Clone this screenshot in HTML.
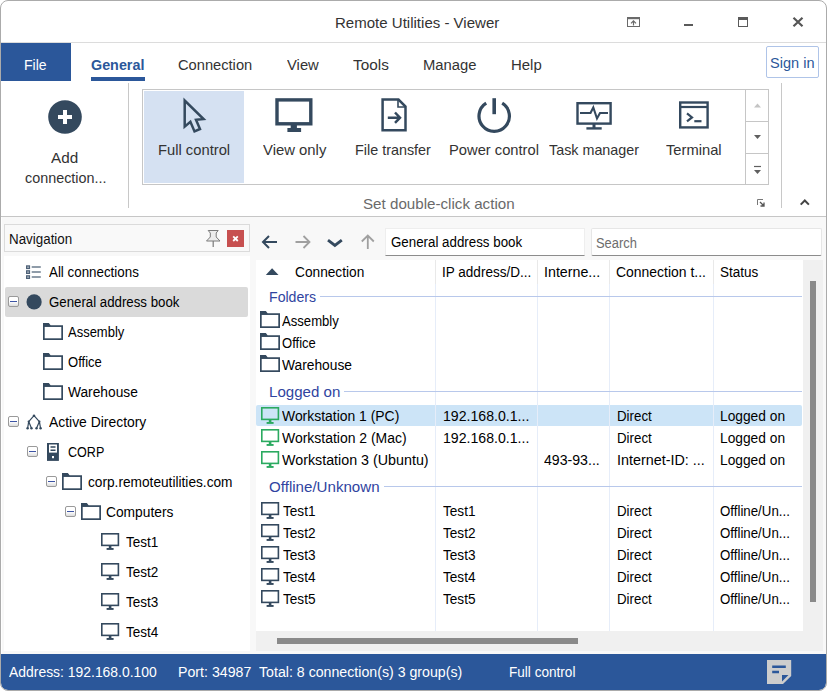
<!DOCTYPE html>
<html><head><meta charset="utf-8"><title>Remote Utilities - Viewer</title>
<style>
html,body{margin:0;padding:0;background:#fff;}
body{width:827px;height:691px;overflow:hidden;position:relative;font-family:"Liberation Sans",sans-serif;}
#win{position:absolute;left:0;top:0;width:827px;height:691px;overflow:hidden;}
#frame{position:absolute;left:0;top:0;width:827px;height:691px;box-sizing:border-box;border:1px solid #ABABAB;border-radius:8px;pointer-events:none;}
.r{position:absolute;display:block;}
.t{position:absolute;white-space:nowrap;transform-origin:0 50%;display:block;}
</style></head><body>
<div id="win">
<span class="t" style="left:334.50px;top:13.00px;font-size:15.5px;line-height:20px;color:#333;transform:scaleX(0.9698);">Remote Utilities - Viewer</span>
<div class="r" style="left:1px;top:42px;width:825px;height:1px;background:#DCDCDC;"></div>
<svg class="r" style="left:626px;top:16px" width="16" height="12" viewBox="0 0 16 12"><rect x="1.5" y="1.5" width="12" height="9" fill="none" stroke="#6a6a6a" stroke-width="1"/><rect x="1" y="1" width="13" height="2.2" fill="#6a6a6a"/><path d="M7.5 9.5V5M5 7.3L7.5 4.8L10 7.3" fill="none" stroke="#6a6a6a" stroke-width="1.2"/></svg>
<div class="r" style="left:684px;top:23.5px;width:9px;height:2.0px;background:#5a5a5a;"></div>
<svg class="r" style="left:737px;top:16px" width="12" height="12" viewBox="0 0 12 12"><rect x="1.5" y="1.5" width="9" height="9" fill="none" stroke="#5a5a5a" stroke-width="1"/><rect x="1" y="1" width="10" height="3" fill="#5a5a5a"/></svg>
<svg class="r" style="left:792px;top:16px" width="12" height="12" viewBox="0 0 12 12"><path d="M1.5 1.8L10.5 10.2M10.5 1.8L1.5 10.2" stroke="#555" stroke-width="2.2" fill="none"/></svg>
<div class="r" style="left:1px;top:43px;width:70px;height:38px;background:#2B579A;"></div>
<span class="t" style="left:24.20px;top:55.00px;font-size:15.5px;line-height:20px;color:#fff;transform:scaleX(0.9056);">File</span>
<span class="t" style="left:91.30px;top:55.00px;font-size:15.5px;line-height:20px;color:#2B579A;font-weight:bold;transform:scaleX(0.9249);">General</span>
<div class="r" style="left:91px;top:77px;width:54px;height:4px;background:#2B579A;"></div>
<span class="t" style="left:178.30px;top:55.00px;font-size:15.5px;line-height:20px;color:#333;transform:scaleX(0.9461);">Connection</span>
<span class="t" style="left:287.00px;top:55.00px;font-size:15.5px;line-height:20px;color:#333;transform:scaleX(0.9542);">View</span>
<span class="t" style="left:353.00px;top:55.00px;font-size:15.5px;line-height:20px;color:#333;transform:scaleX(0.9892);">Tools</span>
<span class="t" style="left:423.30px;top:55.00px;font-size:15.5px;line-height:20px;color:#333;transform:scaleX(0.9548);">Manage</span>
<span class="t" style="left:511.30px;top:55.00px;font-size:15.5px;line-height:20px;color:#333;transform:scaleX(0.9638);">Help</span>
<div class="r" style="left:766px;top:46px;width:53px;height:32px;background:#fff;border:1px solid #AFC4E8;box-sizing:border-box;border-radius:2px;"></div>
<span class="t" style="left:770.00px;top:53.00px;font-size:15.5px;line-height:20px;color:#2B579A;transform:scaleX(0.9382);">Sign in</span>
<div class="r" style="left:128px;top:83px;width:1px;height:125px;background:#C8C8C8;"></div>
<div class="r" style="left:781px;top:83px;width:1px;height:125px;background:#C8C8C8;"></div>
<svg class="r" style="left:47px;top:99px" width="36" height="36" viewBox="0 0 36 36"><circle cx="18" cy="18" r="16.8" fill="#34495E"/><path d="M11 18H25M18 11V25" stroke="#fff" stroke-width="4"/></svg>
<span class="t" style="left:51.40px;top:149.00px;font-size:14.5px;line-height:19px;color:#333;transform:scaleX(1.0539);">Add</span>
<span class="t" style="left:24.50px;top:169.00px;font-size:14.5px;line-height:19px;color:#333;transform:scaleX(0.9913);">connection...</span>
<div class="r" style="left:142px;top:89px;width:627px;height:96px;background:#fff;border:1px solid #C6C6C6;box-sizing:border-box;"></div>
<div class="r" style="left:144px;top:91px;width:100px;height:92px;background:#D5E1F2;"></div>
<div class="r" style="left:745px;top:89px;width:1px;height:96px;background:#C6C6C6;"></div>
<div class="r" style="left:746px;top:121px;width:22px;height:1px;background:#C6C6C6;"></div>
<div class="r" style="left:746px;top:153px;width:22px;height:1px;background:#C6C6C6;"></div>
<svg class="r" style="left:752px;top:100px" width="12" height="10" viewBox="0 0 12 10"><path d="M2 7.5L5.5 3.5L9 7.5Z" fill="#C4C4C4"/></svg>
<svg class="r" style="left:752px;top:132px" width="12" height="10" viewBox="0 0 12 10"><path d="M2 3L5.5 7L9 3Z" fill="#606060"/></svg>
<svg class="r" style="left:752px;top:163.5px" width="12" height="14" viewBox="0 0 12 14"><path d="M2 2.5H9" stroke="#606060" stroke-width="1.2"/><path d="M2 6L5.5 10L9 6Z" fill="#606060"/></svg>
<svg class="r" style="left:180.4px;top:95.5px" width="30" height="40" viewBox="0 0 30 40"><path d="M4.7 4.5V30.6L10.4 25.8L14.5 35.4L20 33L16 23.8L23.6 23Z" fill="none" stroke="#34495E" stroke-width="2.5" stroke-linejoin="miter"/></svg>
<span class="t" style="left:157.70px;top:141.00px;font-size:14.5px;line-height:19px;color:#333;transform:scaleX(1.0169);">Full control</span>
<svg class="r" style="left:272px;top:95px" width="44" height="40" viewBox="0 0 44 40"><rect x="5" y="4.9" width="33.8" height="23.9" fill="none" stroke="#34495E" stroke-width="3.4"/><rect x="18.7" y="30" width="6.2" height="4" fill="#34495E"/><rect x="15.4" y="33" width="13.7" height="4" fill="#34495E"/></svg>
<span class="t" style="left:262.50px;top:141.00px;font-size:14.5px;line-height:19px;color:#333;transform:scaleX(1.0248);">View only</span>
<svg class="r" style="left:378px;top:95px" width="32" height="40" viewBox="0 0 32 40"><path d="M4.6 4.5H20.5L27.5 11.5V35.2H4.6Z" fill="none" stroke="#34495E" stroke-width="2.5"/><path d="M20 4.5V12H27.5" fill="none" stroke="#34495E" stroke-width="1.6"/><path d="M9.8 22.7H21.5M17 17.5L22 22.7L17 27.9" fill="none" stroke="#34495E" stroke-width="2.5"/></svg>
<span class="t" style="left:355.40px;top:141.00px;font-size:14.5px;line-height:19px;color:#333;transform:scaleX(0.9914);">File transfer</span>
<svg class="r" style="left:474px;top:95px" width="40" height="40" viewBox="0 0 40 40"><path d="M12.2 8.2A15.2 15.2 0 1 0 28.2 8.2" fill="none" stroke="#34495E" stroke-width="3.2"/><path d="M20.2 3.2V19.2" stroke="#34495E" stroke-width="3.6"/></svg>
<span class="t" style="left:448.50px;top:141.00px;font-size:14.5px;line-height:19px;color:#333;transform:scaleX(1.0150);">Power control</span>
<svg class="r" style="left:573px;top:95px" width="42" height="40" viewBox="0 0 42 40"><rect x="4.5" y="8.2" width="33.1" height="20.4" fill="none" stroke="#34495E" stroke-width="2.4"/><path d="M21 29V33" stroke="#34495E" stroke-width="3"/><path d="M13.4 33.4H28.7" stroke="#34495E" stroke-width="2.4"/><path d="M7 18H17.5L20.3 12.5L24 23.5L27 18H35" fill="none" stroke="#34495E" stroke-width="2.1"/></svg>
<span class="t" style="left:549.20px;top:141.00px;font-size:14.5px;line-height:19px;color:#333;transform:scaleX(0.9884);">Task manager</span>
<svg class="r" style="left:676px;top:95px" width="36" height="40" viewBox="0 0 36 40"><rect x="4.2" y="7.5" width="27.4" height="24.9" fill="none" stroke="#34495E" stroke-width="2.4"/><path d="M4 12H32" stroke="#34495E" stroke-width="2.2"/><path d="M11 18.4L16 22.4L11 26.4" fill="none" stroke="#34495E" stroke-width="2.2"/><path d="M18.3 26.2H25.5" stroke="#34495E" stroke-width="2.2"/></svg>
<span class="t" style="left:665.80px;top:141.00px;font-size:14.5px;line-height:19px;color:#333;transform:scaleX(1.0144);">Terminal</span>
<span class="t" style="left:363.00px;top:195.00px;font-size:14.5px;line-height:19px;color:#6a6a6a;transform:scaleX(1.0450);">Set double-click action</span>
<svg class="r" style="left:756px;top:198px" width="10" height="10" viewBox="0 0 10 10"><path d="M1.5 7V1.5H7" fill="none" stroke="#777" stroke-width="1"/><path d="M4 4L8 8M8 4.5V8H4.5" fill="none" stroke="#555" stroke-width="1.3"/></svg>
<svg class="r" style="left:798px;top:197px" width="14" height="10" viewBox="0 0 14 10"><path d="M2.7 7.6L6.8 3.5L10.9 7.6" fill="none" stroke="#444" stroke-width="2"/></svg>
<div class="r" style="left:1px;top:216px;width:825px;height:1px;background:#C6C6C6;"></div>
<div class="r" style="left:1px;top:217px;width:825px;height:437px;background:#F8F8F8;"></div>
<div class="r" style="left:1px;top:217px;width:1px;height:437px;background:#fff;"></div>
<div class="r" style="left:4px;top:224px;width:246px;height:28px;background:#F9F9F9;border:1px solid #DBDBDB;box-sizing:border-box;"></div>
<span class="t" style="left:9.30px;top:230.00px;font-size:14px;line-height:18px;color:#111;transform:scaleX(0.9554);">Navigation</span>
<div class="r" style="left:227px;top:230px;width:17px;height:17px;background:#C75050;"></div>
<svg class="r" style="left:227px;top:230px" width="17" height="17" viewBox="0 0 17 17"><path d="M6.2 6.4L10.8 11M10.8 6.4L6.2 11" stroke="#fff" stroke-width="1.8"/></svg>
<svg class="r" style="left:205px;top:229px" width="17" height="19" viewBox="0 0 17 19"><path d="M3.2 1.5H13.2L11.2 4V8L15 12H1.5L5.3 8V4Z" fill="#ECECEC" stroke="#7a7a7a" stroke-width="1"/><path d="M8.2 12V18" stroke="#7a7a7a" stroke-width="1.2"/></svg>
<div class="r" style="left:4px;top:256px;width:246px;height:395px;background:#fff;"></div>
<div class="r" style="left:5px;top:287px;width:243px;height:30px;background:#DADADA;border-radius:2px;"></div>
<svg class="r" style="left:26px;top:265px" width="15" height="14" viewBox="0 0 15 14"><g fill="#AEB9C4" stroke="#4E6177" stroke-width="1.2"><rect x="0.6" y="0.9" width="2.9" height="2.6"/><rect x="0.6" y="5.8" width="2.9" height="2.6"/><rect x="0.6" y="10.8" width="2.9" height="2.6"/></g><path d="M5.7 2H14.8M5.7 7H14.8M5.7 12H14.8" stroke="#6B7C8D" stroke-width="1.7"/></svg>
<span class="t" style="left:49.00px;top:263.00px;font-size:14px;line-height:18px;color:#000;transform:scaleX(0.9538);">All connections</span>
<div class="r" style="left:8px;top:296px;width:11px;height:11px;box-sizing:border-box;border:1px solid #9a9a9a;border-radius:2px;background:linear-gradient(#fff 50%,#DCDCDC);"><div class="r" style="left:1.4px;top:3.9px;width:6.4px;height:1.1px;background:#3D54A5"></div></div>
<svg class="r" style="left:26px;top:294px" width="16" height="16" viewBox="0 0 16 16"><circle cx="8.1" cy="7.9" r="7.6" fill="#34495E"/></svg>
<span class="t" style="left:49.00px;top:293.00px;font-size:14px;line-height:18px;color:#000;transform:scaleX(0.9468);">General address book</span>
<svg class="r" style="left:43px;top:323px" width="20" height="17" viewBox="0 0 20 17"><path d="M0 0H5.8L7.6 2.3V3H0Z" fill="#34495E"/><rect x="0.85" y="3.1" width="18.3" height="13.05" fill="#fff" stroke="#34495E" stroke-width="1.7"/></svg>
<span class="t" style="left:68.00px;top:323.00px;font-size:14px;line-height:18px;color:#000;transform:scaleX(0.9277);">Assembly</span>
<svg class="r" style="left:43px;top:353px" width="20" height="17" viewBox="0 0 20 17"><path d="M0 0H5.8L7.6 2.3V3H0Z" fill="#34495E"/><rect x="0.85" y="3.1" width="18.3" height="13.05" fill="#fff" stroke="#34495E" stroke-width="1.7"/></svg>
<span class="t" style="left:68.00px;top:353.00px;font-size:14px;line-height:18px;color:#000;transform:scaleX(0.9304);">Office</span>
<svg class="r" style="left:43px;top:383px" width="20" height="17" viewBox="0 0 20 17"><path d="M0 0H5.8L7.6 2.3V3H0Z" fill="#34495E"/><rect x="0.85" y="3.1" width="18.3" height="13.05" fill="#fff" stroke="#34495E" stroke-width="1.7"/></svg>
<span class="t" style="left:68.00px;top:383.00px;font-size:14px;line-height:18px;color:#000;transform:scaleX(0.9824);">Warehouse</span>
<div class="r" style="left:8px;top:416px;width:11px;height:11px;box-sizing:border-box;border:1px solid #9a9a9a;border-radius:2px;background:linear-gradient(#fff 50%,#DCDCDC);"><div class="r" style="left:1.4px;top:3.9px;width:6.4px;height:1.1px;background:#3D54A5"></div></div>
<svg class="r" style="left:26px;top:414px" width="16" height="16" viewBox="0 0 16 16"><g fill="none" stroke="#34495E" stroke-width="1.2"><path d="M8 1.6L2.7 7.6M8 1.6L13.4 7.6M2.7 7.6L1.6 14.3M2.7 7.6L5.5 14.3M13.4 7.6L10.5 14.3M13.4 7.6L14.6 14.3"/></g><g fill="#34495E"><circle cx="8" cy="1.6" r="1.2"/><circle cx="2.7" cy="7.6" r="1.1"/><circle cx="13.4" cy="7.6" r="1.1"/><circle cx="1.6" cy="14.3" r="1.2"/><circle cx="5.5" cy="14.3" r="1.2"/><circle cx="10.5" cy="14.3" r="1.2"/><circle cx="14.6" cy="14.3" r="1.2"/></g></svg>
<span class="t" style="left:49.00px;top:413.00px;font-size:14px;line-height:18px;color:#000;transform:scaleX(0.9929);">Active Directory</span>
<div class="r" style="left:27px;top:446px;width:11px;height:11px;box-sizing:border-box;border:1px solid #9a9a9a;border-radius:2px;background:linear-gradient(#fff 50%,#DCDCDC);"><div class="r" style="left:1.4px;top:3.9px;width:6.4px;height:1.1px;background:#3D54A5"></div></div>
<svg class="r" style="left:47px;top:443px" width="12" height="18" viewBox="0 0 12 18"><rect x="0" y="0" width="11.9" height="17.9" fill="#34495E"/><rect x="2" y="1.5" width="8" height="8.1" fill="#fff"/><path d="M3.5 4H8.5M3.5 7.2H8.5" stroke="#34495E" stroke-width="1.4"/><rect x="5" y="13" width="2" height="2.2" fill="#fff"/></svg>
<span class="t" style="left:68.00px;top:443.00px;font-size:14px;line-height:18px;color:#000;transform:scaleX(0.8972);">CORP</span>
<div class="r" style="left:46px;top:476px;width:11px;height:11px;box-sizing:border-box;border:1px solid #9a9a9a;border-radius:2px;background:linear-gradient(#fff 50%,#DCDCDC);"><div class="r" style="left:1.4px;top:3.9px;width:6.4px;height:1.1px;background:#3D54A5"></div></div>
<svg class="r" style="left:62px;top:473px" width="20" height="17" viewBox="0 0 20 17"><path d="M0 0H5.8L7.6 2.3V3H0Z" fill="#34495E"/><rect x="0.85" y="3.1" width="18.3" height="13.05" fill="#fff" stroke="#34495E" stroke-width="1.7"/></svg>
<span class="t" style="left:87.70px;top:473.00px;font-size:14px;line-height:18px;color:#000;transform:scaleX(0.9774);">corp.remoteutilities.com</span>
<div class="r" style="left:65px;top:506px;width:11px;height:11px;box-sizing:border-box;border:1px solid #9a9a9a;border-radius:2px;background:linear-gradient(#fff 50%,#DCDCDC);"><div class="r" style="left:1.4px;top:3.9px;width:6.4px;height:1.1px;background:#3D54A5"></div></div>
<svg class="r" style="left:81px;top:503px" width="20" height="17" viewBox="0 0 20 17"><path d="M0 0H5.8L7.6 2.3V3H0Z" fill="#34495E"/><rect x="0.85" y="3.1" width="18.3" height="13.05" fill="#fff" stroke="#34495E" stroke-width="1.7"/></svg>
<span class="t" style="left:106.40px;top:503.00px;font-size:14px;line-height:18px;color:#000;transform:scaleX(0.9845);">Computers</span>
<svg class="r" style="left:100.5px;top:533px" width="19" height="18" viewBox="0 0 19 18"><rect x="0.8" y="0.8" width="16.6" height="11.6" fill="none" stroke="#34495E" stroke-width="1.6"/><rect x="7.8" y="13" width="2.6" height="2.4" fill="#34495E"/><rect x="5.6" y="15" width="7" height="1.9" fill="#34495E"/></svg>
<span class="t" style="left:125.50px;top:533.00px;font-size:14px;line-height:18px;color:#000;transform:scaleX(0.9653);">Test1</span>
<svg class="r" style="left:100.5px;top:563px" width="19" height="18" viewBox="0 0 19 18"><rect x="0.8" y="0.8" width="16.6" height="11.6" fill="none" stroke="#34495E" stroke-width="1.6"/><rect x="7.8" y="13" width="2.6" height="2.4" fill="#34495E"/><rect x="5.6" y="15" width="7" height="1.9" fill="#34495E"/></svg>
<span class="t" style="left:125.50px;top:563.00px;font-size:14px;line-height:18px;color:#000;transform:scaleX(0.9653);">Test2</span>
<svg class="r" style="left:100.5px;top:593px" width="19" height="18" viewBox="0 0 19 18"><rect x="0.8" y="0.8" width="16.6" height="11.6" fill="none" stroke="#34495E" stroke-width="1.6"/><rect x="7.8" y="13" width="2.6" height="2.4" fill="#34495E"/><rect x="5.6" y="15" width="7" height="1.9" fill="#34495E"/></svg>
<span class="t" style="left:125.50px;top:593.00px;font-size:14px;line-height:18px;color:#000;transform:scaleX(0.9653);">Test3</span>
<svg class="r" style="left:100.5px;top:623px" width="19" height="18" viewBox="0 0 19 18"><rect x="0.8" y="0.8" width="16.6" height="11.6" fill="none" stroke="#34495E" stroke-width="1.6"/><rect x="7.8" y="13" width="2.6" height="2.4" fill="#34495E"/><rect x="5.6" y="15" width="7" height="1.9" fill="#34495E"/></svg>
<span class="t" style="left:125.50px;top:623.00px;font-size:14px;line-height:18px;color:#000;transform:scaleX(0.9653);">Test4</span>
<svg class="r" style="left:260px;top:232px" width="20" height="20" viewBox="0 0 20 20"><path d="M3 10H17M9 4L3 10L9 16" fill="none" stroke="#34495E" stroke-width="2"/></svg>
<svg class="r" style="left:293px;top:232px" width="20" height="20" viewBox="0 0 20 20"><path d="M2.5 10H16.5M10.5 4L16.5 10L10.5 16" fill="none" stroke="#A0A0A0" stroke-width="1.8"/></svg>
<svg class="r" style="left:325px;top:235px" width="20" height="14" viewBox="0 0 20 14"><path d="M3 5.2L9.9 10.4L16.8 5.2" fill="none" stroke="#34495E" stroke-width="2.9"/></svg>
<svg class="r" style="left:358px;top:232px" width="20" height="20" viewBox="0 0 20 20"><path d="M9.8 17V3.5M3.8 9.5L9.8 3.5L15.8 9.5" fill="none" stroke="#A0A0A0" stroke-width="1.8"/></svg>
<div class="r" style="left:385px;top:228px;width:200px;height:28px;background:#fff;border:1px solid #EEEEEE;border-bottom:1px solid #8C8C8C;box-sizing:border-box;"></div>
<span class="t" style="left:390.80px;top:233.00px;font-size:14px;line-height:18px;color:#000;transform:scaleX(0.9519);">General address book</span>
<div class="r" style="left:591px;top:228px;width:231px;height:28px;background:#fff;border:1px solid #E6E6E6;border-bottom:1px solid #8C8C8C;border-radius:2px;box-sizing:border-box;"></div>
<span class="t" style="left:596.40px;top:234.00px;font-size:14px;line-height:18px;color:#6d6d6d;transform:scaleX(0.9216);">Search</span>
<div class="r" style="left:256px;top:260px;width:567px;height:391px;background:#F0F0F0;"></div>
<div class="r" style="left:256px;top:260px;width:547px;height:371px;background:#fff;"></div>
<div class="r" style="left:256px;top:405px;width:546px;height:21px;background:#CCE4F7;border-radius:2px;"></div>
<div class="r" style="left:435px;top:260px;width:1px;height:24px;background:#E9E9E9;"></div>
<div class="r" style="left:435px;top:284px;width:1px;height:347px;background:#E6EDF9;"></div>
<div class="r" style="left:537px;top:260px;width:1px;height:24px;background:#E9E9E9;"></div>
<div class="r" style="left:537px;top:284px;width:1px;height:347px;background:#E6EDF9;"></div>
<div class="r" style="left:609px;top:260px;width:1px;height:24px;background:#E9E9E9;"></div>
<div class="r" style="left:609px;top:284px;width:1px;height:347px;background:#E6EDF9;"></div>
<div class="r" style="left:713px;top:260px;width:1px;height:24px;background:#E9E9E9;"></div>
<div class="r" style="left:713px;top:284px;width:1px;height:347px;background:#E6EDF9;"></div>
<svg class="r" style="left:264px;top:267px" width="18" height="9" viewBox="0 0 18 9"><path d="M1.8 8L8.1 1.2L14.5 8Z" fill="#34495E"/></svg>
<span class="t" style="left:294.50px;top:263.00px;font-size:14px;line-height:18px;color:#000;transform:scaleX(0.9783);">Connection</span>
<span class="t" style="left:442.00px;top:263.00px;font-size:14px;line-height:18px;color:#000;transform:scaleX(0.9672);">IP address/D...</span>
<span class="t" style="left:543.80px;top:263.00px;font-size:14px;line-height:18px;color:#000;transform:scaleX(1.0176);">Interne...</span>
<span class="t" style="left:616.40px;top:263.00px;font-size:14px;line-height:18px;color:#000;transform:scaleX(0.9956);">Connection t...</span>
<span class="t" style="left:720.40px;top:263.00px;font-size:14px;line-height:18px;color:#000;transform:scaleX(0.9625);">Status</span>
<span class="t" style="left:268.90px;top:287.00px;font-size:15px;line-height:20px;color:#30449F;transform:scaleX(0.9415);">Folders</span>
<div class="r" style="left:320px;top:296px;width:482px;height:1px;background:#B8C8EB;"></div>
<span class="t" style="left:268.90px;top:382.00px;font-size:15px;line-height:20px;color:#30449F;transform:scaleX(1.0060);">Logged on</span>
<div class="r" style="left:344px;top:391px;width:458px;height:1px;background:#B8C8EB;"></div>
<span class="t" style="left:268.90px;top:477.00px;font-size:15px;line-height:20px;color:#30449F;transform:scaleX(1.0073);">Offline/Unknown</span>
<div class="r" style="left:384px;top:486px;width:418px;height:1px;background:#B8C8EB;"></div>
<svg class="r" style="left:260px;top:311px" width="20" height="17" viewBox="0 0 20 17"><path d="M0 0H5.8L7.6 2.3V3H0Z" fill="#34495E"/><rect x="0.85" y="3.1" width="18.3" height="13.05" fill="#fff" stroke="#34495E" stroke-width="1.7"/></svg>
<span class="t" style="left:282.00px;top:312.00px;font-size:14px;line-height:18px;color:#000;transform:scaleX(0.9359);">Assembly</span>
<svg class="r" style="left:260px;top:333px" width="20" height="17" viewBox="0 0 20 17"><path d="M0 0H5.8L7.6 2.3V3H0Z" fill="#34495E"/><rect x="0.85" y="3.1" width="18.3" height="13.05" fill="#fff" stroke="#34495E" stroke-width="1.7"/></svg>
<span class="t" style="left:282.00px;top:334.00px;font-size:14px;line-height:18px;color:#000;transform:scaleX(0.9304);">Office</span>
<svg class="r" style="left:260px;top:355px" width="20" height="17" viewBox="0 0 20 17"><path d="M0 0H5.8L7.6 2.3V3H0Z" fill="#34495E"/><rect x="0.85" y="3.1" width="18.3" height="13.05" fill="#fff" stroke="#34495E" stroke-width="1.7"/></svg>
<span class="t" style="left:282.00px;top:356.00px;font-size:14px;line-height:18px;color:#000;transform:scaleX(0.9852);">Warehouse</span>
<svg class="r" style="left:260.8px;top:407px" width="19" height="18" viewBox="0 0 19 18"><rect x="0.8" y="0.8" width="16.6" height="11.6" fill="none" stroke="#2BAA60" stroke-width="1.6"/><rect x="7.8" y="13" width="2.6" height="2.4" fill="#2BAA60"/><rect x="5.6" y="15" width="7" height="1.9" fill="#2BAA60"/></svg>
<span class="t" style="left:282.20px;top:407.00px;font-size:14px;line-height:18px;color:#000;transform:scaleX(0.9939);">Workstation 1 (PC)</span>
<span class="t" style="left:443.00px;top:407.00px;font-size:14px;line-height:18px;color:#000;transform:scaleX(1.0081);">192.168.0.1...</span>
<span class="t" style="left:616.50px;top:407.00px;font-size:14px;line-height:18px;color:#000;transform:scaleX(0.9496);">Direct</span>
<span class="t" style="left:720.40px;top:407.00px;font-size:14px;line-height:18px;color:#000;transform:scaleX(0.9826);">Logged on</span>
<svg class="r" style="left:260.8px;top:429px" width="19" height="18" viewBox="0 0 19 18"><rect x="0.8" y="0.8" width="16.6" height="11.6" fill="none" stroke="#2BAA60" stroke-width="1.6"/><rect x="7.8" y="13" width="2.6" height="2.4" fill="#2BAA60"/><rect x="5.6" y="15" width="7" height="1.9" fill="#2BAA60"/></svg>
<span class="t" style="left:282.20px;top:429.00px;font-size:14px;line-height:18px;color:#000;transform:scaleX(0.9966);">Workstation 2 (Mac)</span>
<span class="t" style="left:443.00px;top:429.00px;font-size:14px;line-height:18px;color:#000;transform:scaleX(1.0081);">192.168.0.1...</span>
<span class="t" style="left:616.50px;top:429.00px;font-size:14px;line-height:18px;color:#000;transform:scaleX(0.9496);">Direct</span>
<span class="t" style="left:720.40px;top:429.00px;font-size:14px;line-height:18px;color:#000;transform:scaleX(0.9826);">Logged on</span>
<svg class="r" style="left:260.8px;top:451px" width="19" height="18" viewBox="0 0 19 18"><rect x="0.8" y="0.8" width="16.6" height="11.6" fill="none" stroke="#2BAA60" stroke-width="1.6"/><rect x="7.8" y="13" width="2.6" height="2.4" fill="#2BAA60"/><rect x="5.6" y="15" width="7" height="1.9" fill="#2BAA60"/></svg>
<span class="t" style="left:282.20px;top:451.00px;font-size:14px;line-height:18px;color:#000;transform:scaleX(1.0201);">Workstation 3 (Ubuntu)</span>
<span class="t" style="left:544.30px;top:451.00px;font-size:14px;line-height:18px;color:#000;transform:scaleX(1.0085);">493-93...</span>
<span class="t" style="left:616.50px;top:451.00px;font-size:14px;line-height:18px;color:#000;transform:scaleX(1.0256);">Internet-ID: ...</span>
<span class="t" style="left:720.40px;top:451.00px;font-size:14px;line-height:18px;color:#000;transform:scaleX(0.9826);">Logged on</span>
<svg class="r" style="left:260.8px;top:502px" width="19" height="18" viewBox="0 0 19 18"><rect x="0.8" y="0.8" width="16.6" height="11.6" fill="none" stroke="#34495E" stroke-width="1.6"/><rect x="7.8" y="13" width="2.6" height="2.4" fill="#34495E"/><rect x="5.6" y="15" width="7" height="1.9" fill="#34495E"/></svg>
<span class="t" style="left:282.50px;top:502.00px;font-size:14px;line-height:18px;color:#000;transform:scaleX(0.9713);">Test1</span>
<span class="t" style="left:442.50px;top:502.00px;font-size:14px;line-height:18px;color:#000;transform:scaleX(0.9713);">Test1</span>
<span class="t" style="left:616.50px;top:502.00px;font-size:14px;line-height:18px;color:#000;transform:scaleX(0.9496);">Direct</span>
<span class="t" style="left:720.40px;top:502.00px;font-size:14px;line-height:18px;color:#000;transform:scaleX(0.9479);">Offline/Un...</span>
<svg class="r" style="left:260.8px;top:524px" width="19" height="18" viewBox="0 0 19 18"><rect x="0.8" y="0.8" width="16.6" height="11.6" fill="none" stroke="#34495E" stroke-width="1.6"/><rect x="7.8" y="13" width="2.6" height="2.4" fill="#34495E"/><rect x="5.6" y="15" width="7" height="1.9" fill="#34495E"/></svg>
<span class="t" style="left:282.50px;top:524.00px;font-size:14px;line-height:18px;color:#000;transform:scaleX(0.9713);">Test2</span>
<span class="t" style="left:442.50px;top:524.00px;font-size:14px;line-height:18px;color:#000;transform:scaleX(0.9713);">Test2</span>
<span class="t" style="left:616.50px;top:524.00px;font-size:14px;line-height:18px;color:#000;transform:scaleX(0.9496);">Direct</span>
<span class="t" style="left:720.40px;top:524.00px;font-size:14px;line-height:18px;color:#000;transform:scaleX(0.9479);">Offline/Un...</span>
<svg class="r" style="left:260.8px;top:546px" width="19" height="18" viewBox="0 0 19 18"><rect x="0.8" y="0.8" width="16.6" height="11.6" fill="none" stroke="#34495E" stroke-width="1.6"/><rect x="7.8" y="13" width="2.6" height="2.4" fill="#34495E"/><rect x="5.6" y="15" width="7" height="1.9" fill="#34495E"/></svg>
<span class="t" style="left:282.50px;top:546.00px;font-size:14px;line-height:18px;color:#000;transform:scaleX(0.9713);">Test3</span>
<span class="t" style="left:442.50px;top:546.00px;font-size:14px;line-height:18px;color:#000;transform:scaleX(0.9713);">Test3</span>
<span class="t" style="left:616.50px;top:546.00px;font-size:14px;line-height:18px;color:#000;transform:scaleX(0.9496);">Direct</span>
<span class="t" style="left:720.40px;top:546.00px;font-size:14px;line-height:18px;color:#000;transform:scaleX(0.9479);">Offline/Un...</span>
<svg class="r" style="left:260.8px;top:568px" width="19" height="18" viewBox="0 0 19 18"><rect x="0.8" y="0.8" width="16.6" height="11.6" fill="none" stroke="#34495E" stroke-width="1.6"/><rect x="7.8" y="13" width="2.6" height="2.4" fill="#34495E"/><rect x="5.6" y="15" width="7" height="1.9" fill="#34495E"/></svg>
<span class="t" style="left:282.50px;top:568.00px;font-size:14px;line-height:18px;color:#000;transform:scaleX(0.9713);">Test4</span>
<span class="t" style="left:442.50px;top:568.00px;font-size:14px;line-height:18px;color:#000;transform:scaleX(0.9713);">Test4</span>
<span class="t" style="left:616.50px;top:568.00px;font-size:14px;line-height:18px;color:#000;transform:scaleX(0.9496);">Direct</span>
<span class="t" style="left:720.40px;top:568.00px;font-size:14px;line-height:18px;color:#000;transform:scaleX(0.9479);">Offline/Un...</span>
<svg class="r" style="left:260.8px;top:590px" width="19" height="18" viewBox="0 0 19 18"><rect x="0.8" y="0.8" width="16.6" height="11.6" fill="none" stroke="#34495E" stroke-width="1.6"/><rect x="7.8" y="13" width="2.6" height="2.4" fill="#34495E"/><rect x="5.6" y="15" width="7" height="1.9" fill="#34495E"/></svg>
<span class="t" style="left:282.50px;top:590.00px;font-size:14px;line-height:18px;color:#000;transform:scaleX(0.9713);">Test5</span>
<span class="t" style="left:442.50px;top:590.00px;font-size:14px;line-height:18px;color:#000;transform:scaleX(0.9713);">Test5</span>
<span class="t" style="left:616.50px;top:590.00px;font-size:14px;line-height:18px;color:#000;transform:scaleX(0.9496);">Direct</span>
<span class="t" style="left:720.40px;top:590.00px;font-size:14px;line-height:18px;color:#000;transform:scaleX(0.9479);">Offline/Un...</span>
<div class="r" style="left:810px;top:281px;width:6px;height:321px;background:#8A8A8A;"></div>
<div class="r" style="left:277px;top:638px;width:301px;height:6px;background:#8A8A8A;"></div>
<div class="r" style="left:1px;top:654px;width:825px;height:36px;background:#2B579A;border-radius:0 0 7px 7px;"></div>
<span class="t" style="left:8.50px;top:663.00px;font-size:14px;line-height:18px;color:#fff;transform:scaleX(0.9941);">Address: 192.168.0.100</span>
<span class="t" style="left:177.70px;top:663.00px;font-size:14px;line-height:18px;color:#fff;transform:scaleX(1.0127);">Port: 34987</span>
<span class="t" style="left:258.80px;top:663.00px;font-size:14px;line-height:18px;color:#fff;transform:scaleX(1.0122);">Total: 8 connection(s) 3 group(s)</span>
<span class="t" style="left:509.30px;top:663.00px;font-size:14px;line-height:18px;color:#fff;transform:scaleX(0.9699);">Full control</span>
<svg class="r" style="left:767px;top:660px" width="25" height="25" viewBox="0 0 25 25"><path d="M0 0H24.2V16L16 24H0Z" fill="#CDCDCD"/><path d="M5.2 6.7H18.8M5.2 12.1H12" stroke="#2B579A" stroke-width="2.5"/><path d="M15 15H21.5L15 21.5Z" fill="#2B579A"/></svg>
</div>
<div id="frame"></div>
</body></html>
